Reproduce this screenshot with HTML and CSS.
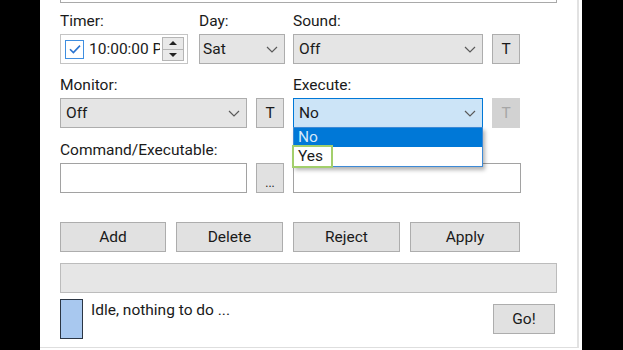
FILE: index.html
```html
<!DOCTYPE html>
<html lang="en">
<head>
    <meta charset="UTF-8">
    <meta name="viewport" content="width=device-width, initial-scale=1.0">
    <title>Scheduler</title>
    <link rel="stylesheet" href="styles.css">
</head>
<body>
    <div class="screen">
        <div class="window">
            <!-- Caja superior (cortada) -->
            <div class="topbox"></div>

            <!-- Timer / Day / Sound -->
            <div class="row row-1">
                <div class="field w-timer">
                    <label>Timer:</label>
                    <div class="timebox">
                        <span class="check">
                            <svg width="16" height="16" viewBox="0 0 16 16">
                                <path d="M3 8.2 L6.4 11.6 L13 4.6" fill="none" stroke="#2a73d0" stroke-width="1.6"/>
                            </svg>
                        </span>
                        <span class="time">10:00:00 PM</span>
                        <span class="spin">
                            <span class="spin-btn"><span class="tri-up"></span></span>
                            <span class="spin-btn"><span class="tri-down"></span></span>
                        </span>
                    </div>
                </div>
                <div class="field w-day">
                    <label>Day:</label>
                    <div class="combo">
                        <span>Sat</span>
                        <svg class="chev" width="12" height="7" viewBox="0 0 12 7"><path d="M1 1 L6 6 L11 1" fill="none" stroke="#5a5a5a" stroke-width="1.2"/></svg>
                    </div>
                </div>
                <div class="field">
                    <label>Sound:</label>
                    <div class="pair">
                        <div class="combo w-wide">
                            <span>Off</span>
                            <svg class="chev" width="12" height="7" viewBox="0 0 12 7"><path d="M1 1 L6 6 L11 1" fill="none" stroke="#5a5a5a" stroke-width="1.2"/></svg>
                        </div>
                        <button class="btn tbtn">T</button>
                    </div>
                </div>
            </div>

            <!-- Monitor / Execute -->
            <div class="row row-2">
                <div class="field">
                    <label>Monitor:</label>
                    <div class="pair">
                        <div class="combo w-left">
                            <span>Off</span>
                            <svg class="chev" width="12" height="7" viewBox="0 0 12 7"><path d="M1 1 L6 6 L11 1" fill="none" stroke="#5a5a5a" stroke-width="1.2"/></svg>
                        </div>
                        <button class="btn tbtn">T</button>
                    </div>
                </div>
                <div class="field">
                    <label>Execute:</label>
                    <div class="pair">
                        <div class="combo w-wide open">
                            <span>No</span>
                            <svg class="chev" width="12" height="7" viewBox="0 0 12 7"><path d="M1 1 L6 6 L11 1" fill="none" stroke="#5a5a5a" stroke-width="1.2"/></svg>
                            <!-- Lista desplegada -->
                            <ul class="droplist">
                                <li class="selected">No</li>
                                <li class="focused">Yes</li>
                            </ul>
                        </div>
                        <button class="btn tbtn" disabled>T</button>
                    </div>
                </div>
            </div>

            <!-- Command -->
            <div class="row row-3">
                <div class="field">
                    <label>Command/Executable:</label>
                    <div class="pair">
                        <input type="text" class="textbox w-left">
                        <button class="btn tbtn dots">...</button>
                    </div>
                </div>
                <div class="field">
                    <label>&nbsp;</label>
                    <input type="text" class="textbox w-arg">
                </div>
            </div>

            <!-- Botones -->
            <div class="actions">
                <button class="btn">Add</button>
                <button class="btn">Delete</button>
                <button class="btn">Reject</button>
                <button class="btn">Apply</button>
            </div>

            <div class="progress"></div>

            <div class="status">
                <span class="indicator"></span>
                <span class="status-text">Idle, nothing to do ...</span>
                <button class="btn go">Go!</button>
            </div>
        </div>
    </div>
</body>
</html>
```

FILE: styles.css
```css
body {
    margin: 0;
    padding: 0;
    background-color: #000;
    font-family: Roboto, "Liberation Sans", sans-serif;
    font-size: 15.5px;
    color: #1a1a1a;
}

.screen {
    margin-left: 40px;
    width: 542px;
    height: 350px;
    background: #fff;
}

.window {
    box-sizing: border-box;
    width: 539px;
    height: 348px;
    padding: 0 20px;
    background: #fff;
    border-right: 2px solid #e2e2e2;
    border-bottom: 1px solid #dedede;
}

.topbox {
    width: 497px;
    height: 3px;
    box-sizing: border-box;
    border: 1px solid #a9a9a9;
    border-top: none;
}

.row {
    display: flex;
    align-items: flex-start;
}

.row-1 { margin-top: 9px; }
.row-2 { margin-top: 12px; gap: 9px; }
.row-3 { margin-top: 13px; gap: 9px; }

.field {
    display: flex;
    flex-direction: column;
}

.field label {
    height: 22px;
    line-height: 18px;
    white-space: nowrap;
}

.w-timer { width: 128px; margin-right: 11px; }
.w-day { width: 86px; margin-right: 8px; }

.pair {
    display: flex;
    gap: 9px;
}

/* Timer con casilla y flechas */
.timebox {
    box-sizing: border-box;
    height: 30px;
    display: flex;
    align-items: center;
    padding: 0 3px 0 4px;
    border: 1px solid #c4c4c4;
    background: #fff;
}

.check {
    box-sizing: border-box;
    width: 19px;
    height: 19px;
    border: 1px solid #3f8ee0;
    display: flex;
    align-items: center;
    justify-content: center;
    flex-shrink: 0;
}

.time {
    margin-left: 5px;
    width: 71px;
    overflow: hidden;
    white-space: nowrap;
    flex-shrink: 0;
}

.spin {
    margin-left: auto;
    width: 22px;
    height: 24px;
    display: flex;
    flex-direction: column;
    box-sizing: border-box;
    border: 1px solid #b5b5b5;
    background: #e9e9e9;
}

.spin-btn {
    flex: 1;
    display: flex;
    align-items: center;
    justify-content: center;
}

.spin-btn + .spin-btn {
    border-top: 1px solid #b5b5b5;
}

.tri-up {
    border-left: 4px solid transparent;
    border-right: 4px solid transparent;
    border-bottom: 4px solid #222;
}

.tri-down {
    border-left: 4px solid transparent;
    border-right: 4px solid transparent;
    border-top: 4px solid #222;
}

/* Combos */
.combo {
    position: relative;
    box-sizing: border-box;
    height: 30px;
    display: flex;
    align-items: center;
    padding: 0 6px 0 5px;
    background: #e5e5e5;
    border: 1px solid #adadad;
}

.combo .chev {
    margin-left: auto;
}

.w-day .combo { padding-left: 3px; }
.w-wide { width: 190px; }
.w-left { width: 187px; }

.combo.open {
    background: #cce4f7;
    border-color: #0078d7;
}

.droplist {
    position: absolute;
    top: 100%;
    left: -1px;
    width: 190px;
    box-sizing: border-box;
    margin: 0;
    padding: 0;
    list-style: none;
    background: #fff;
    border: 1px solid #3d8ad6;
    box-shadow: 2px 3px 4px rgba(0, 0, 0, 0.3);
    z-index: 2;
}

.droplist li {
    position: relative;
    height: 19px;
    line-height: 19px;
    padding-left: 4px;
}

.droplist li.selected {
    background: #0078d7;
    color: #d6e9fa;
}

.droplist li.focused::after {
    content: "";
    position: absolute;
    left: -2px;
    top: -2px;
    width: 41px;
    height: 23px;
    box-sizing: border-box;
    border: 2px solid #a3cf6c;
}

/* Botones */
.btn {
    box-sizing: border-box;
    height: 30px;
    margin: 0;
    padding: 0;
    font-family: inherit;
    font-size: 15.5px;
    color: #1a1a1a;
    background: #e1e1e1;
    border: 1px solid #adadad;
}

.tbtn {
    width: 28px;
}

.tbtn:disabled {
    background: #d2d2d2;
    border-color: #d2d2d2;
    color: #a6a6a6;
}

.dots {
    font-size: 12px;
    line-height: 30px;
    padding-top: 4px;
}

.textbox {
    box-sizing: border-box;
    height: 30px;
    margin: 0;
    border: 1px solid #a2a2a2;
    background: #fff;
}

.w-arg { width: 228px; }

.actions {
    margin-top: 29px;
    display: grid;
    grid-template-columns: 106px 107px 107px 110px;
    gap: 10px;
}

.progress {
    margin-top: 11px;
    box-sizing: border-box;
    width: 497px;
    height: 30px;
    background: #e6e6e6;
    border: 1px solid #bcbcbc;
}

.status {
    margin-top: 6px;
    display: flex;
    align-items: flex-start;
}

.indicator {
    box-sizing: border-box;
    width: 23px;
    height: 40px;
    background: #a8c8ef;
    border: 1px solid #2b3644;
}

.status-text {
    margin-left: 8px;
    line-height: 18px;
    margin-top: 2px;
}

.go {
    margin-left: auto;
    margin-right: 2px;
    margin-top: 5px;
    width: 62px;
}
```
